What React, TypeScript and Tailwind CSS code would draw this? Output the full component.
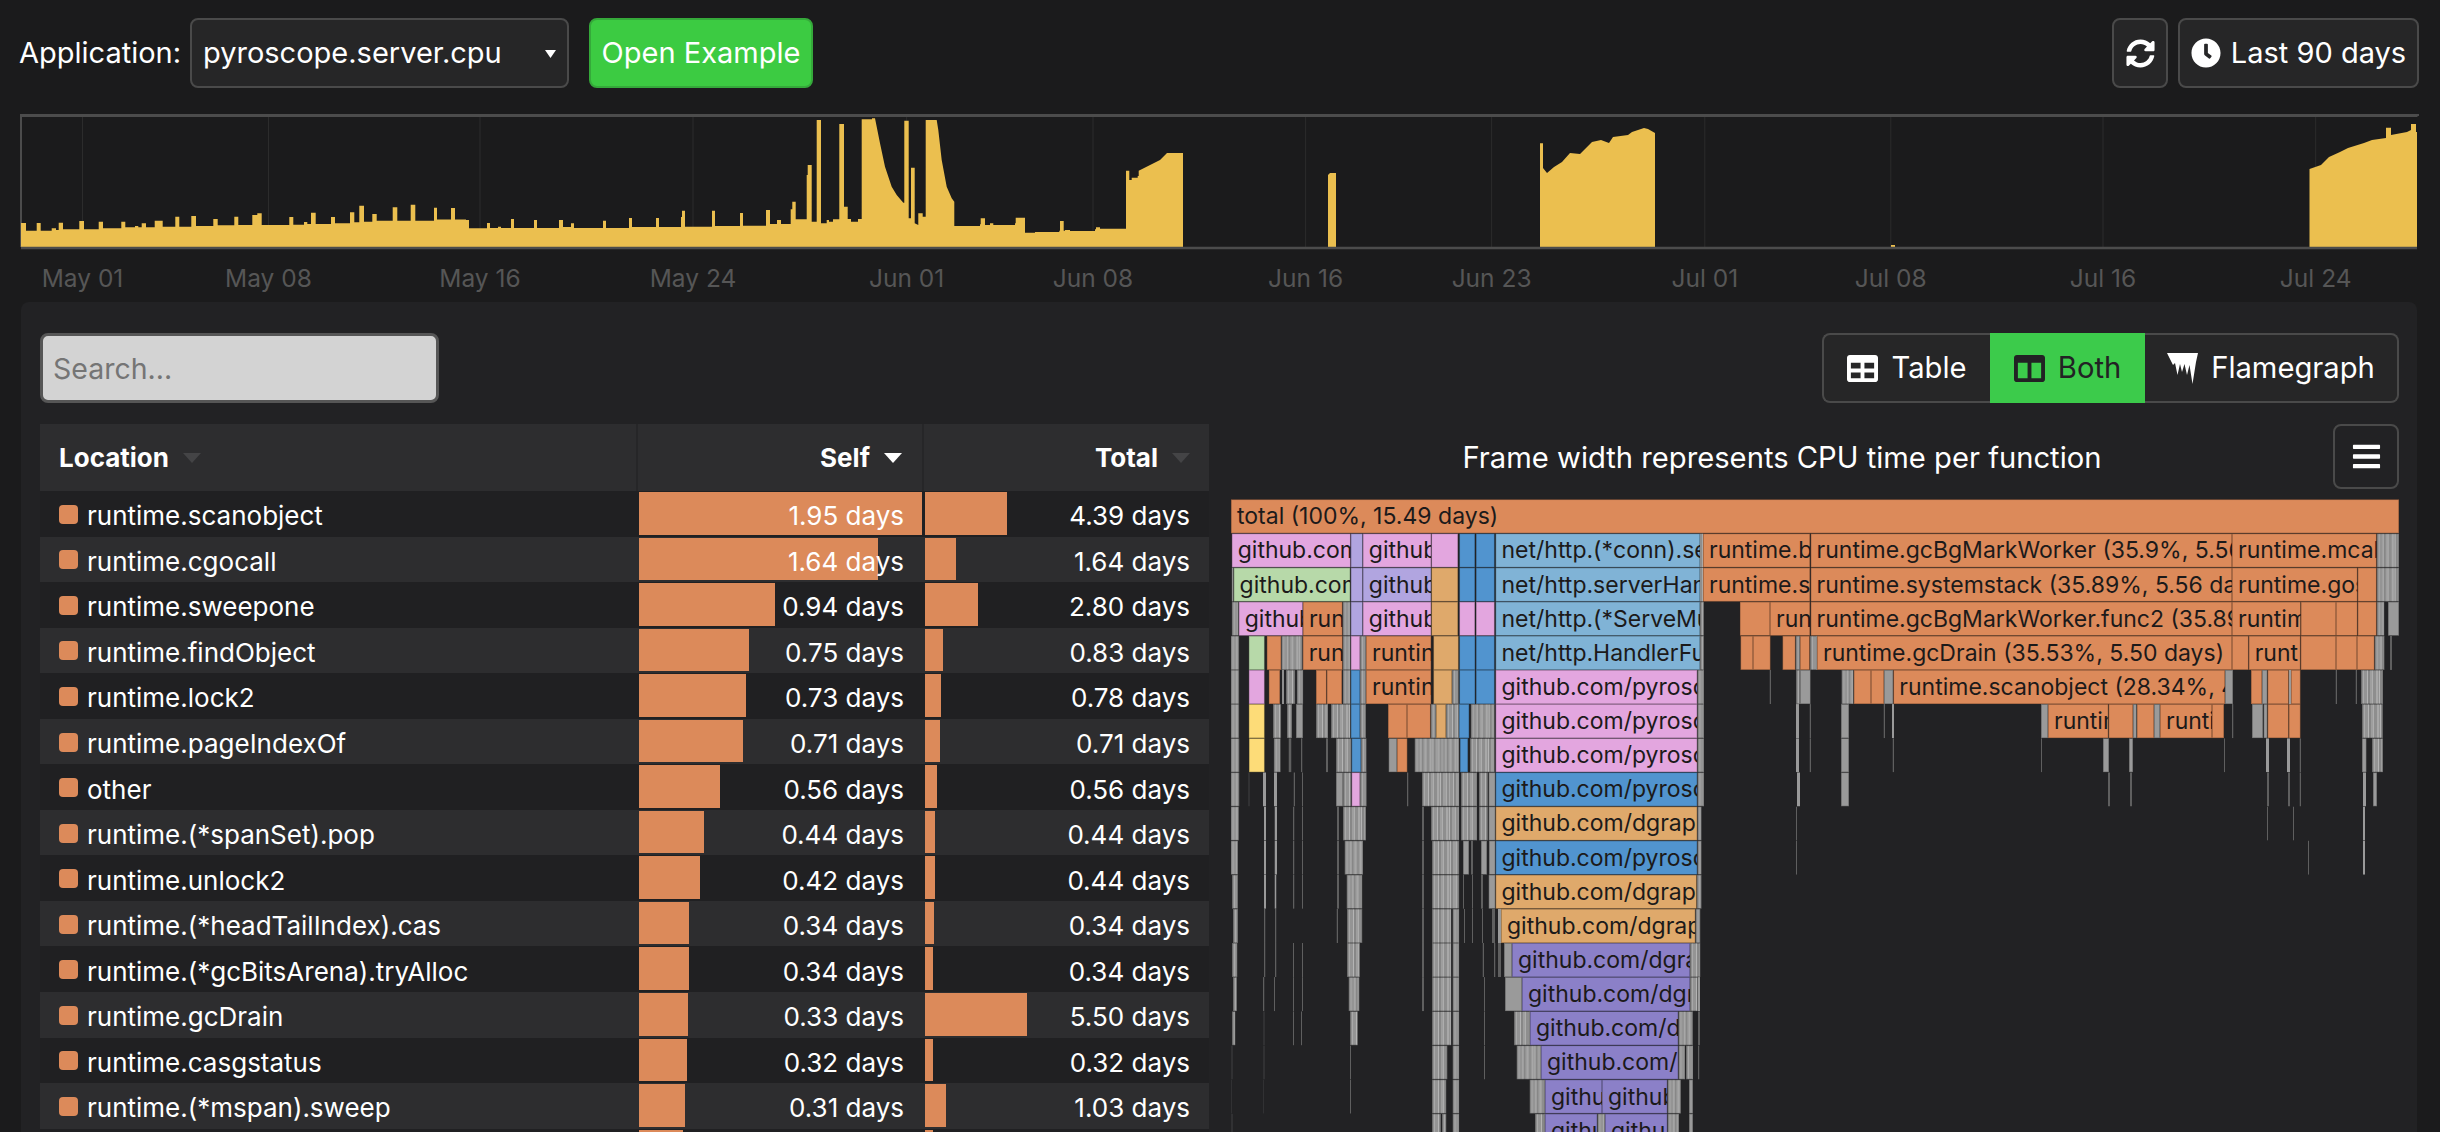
import React from "react";
import { FaBars, FaClock, FaColumns, FaSyncAlt, FaTable } from "react-icons/fa";

// timeline area, page coordinates
const timelineAreas = [
  "M21 247 V223 H26 V230.7 H36.7 V223 H40.7 V230.7 H51.7 V228.3 H56 V230 H58.7 V222.7 H63 V229.3 H79.3 V221 H84 V229.3 H98.7 V221.7 H103 V228.3 H121.3 V221.7 H125.3 V227.3 H135 V226 H138.3 V227.3 H141.7 V223.3 H146 V227.3 H154.7 V220.7 H162.7 V226.7 H175.3 V216.7 H179.3 V226.7 H191.3 V216 H196 V226 H213.3 V219 H217.7 V225.3 H234.3 V216.7 H238.3 V225 H252.3 V215 H257.3 V213.3 H261.7 V225 H289.3 V217 H293.3 V224.7 H304 V222 H307.3 V224 H311 V212.7 H315.7 V224 H331 V217 H335 V223.3 H350 V212.3 H354.3 V222.3 H359.3 V205.7 H364 V221.7 H372.3 V214 H376.7 V220.7 H392.7 V207.3 H397.3 V220.7 H410.7 V204.7 H415.3 V220.7 H434 V207.7 H437 V219.5 H451 V208 H455 V219.5 H466 V220 H469 V228.3 H487 V223 H490 V228 H498 V226.7 H501 V228 H511 V219 H514 V228 H534 V220 H537 V228 H559 V220 H563 V227 H571 V223.3 H574 V228 H603 V220.7 H606 V228 H629 V218 H632 V227 H656 V218 H659 V227 H681 V217 H682 V210.7 H685 V226.7 H712 V210.7 H715 V226 H740 V213 H743 V225.7 H766 V210 H770 V224 H777 V220 H781 V224 H790.7 V209.3 H792.3 V201.7 H795.7 V219.3 H806.7 V175 H807.7 V165 H811.7 V221.7 H816.7 V120 H821 V223.3 H826.7 V220 H829 V221.7 H833 V219.3 H839.3 V124 H844 V206.7 H847.7 V219 H851 V221.7 H858 V219 H861.7 V119.3 H872 V118.3 H875 L880 143.3 L885 166.7 L891.7 186.7 L896.7 195 L903.3 202.7 H904.3 V120.7 H908.7 V218.3 H911 V167.7 H914.7 V223.3 L918.3 225 V213.3 H922.7 V216.7 H925.7 V120 H936.7 L938.3 130 L941.7 160 L946.7 186.7 L951.7 198.3 L954.3 201.7 V226 H980 V224.3 H980.7 V218.3 H985 V225 H990 V223.3 H993.3 V225 H1015 V223.3 H1015.7 V217.7 H1025 V232.7 H1035 V232 H1059.3 V230.7 H1060 V221 H1063.7 V230.7 H1065 V230 H1070 V231 H1095 V229.3 H1096 V227.3 H1100 V228.7 H1126 V170.7 H1129.3 V180 H1131.7 V177.7 H1137.7 V176 H1138.7 V170.7 L1160 160 L1167 153 H1183 V247 Z",
  "M1328 247 V175 L1330 173 H1336 V247 Z",
  "M1540 247 V143.3 H1543 V168 L1547 173 L1554 167 L1562 162 L1570 153 L1580 154 L1592 142 L1601 140 L1609 143 L1613 137 L1628 135 L1632 132 L1644 128 L1648 129 L1655 133 V247 Z",
  "M1891 247 V245 H1895 V247 Z",
  "M2309.5 247 V169 L2321 165 L2329 157 L2340 152 L2348 148 L2364 143 L2372 140 L2386 138 V127.7 H2391 V135 L2407 132 L2411 130 V124 H2416 V132 L2417 132 V247 Z",
];

const timelineTicks = [
  { x: 82.5, label: "May 01" },
  { x: 268.5, label: "May 08" },
  { x: 480, label: "May 16" },
  { x: 693, label: "May 24" },
  { x: 906.6, label: "Jun 01" },
  { x: 1093, label: "Jun 08" },
  { x: 1305.6, label: "Jun 16" },
  { x: 1491.6, label: "Jun 23" },
  { x: 1704.8, label: "Jul 01" },
  { x: 1890.8, label: "Jul 08" },
  { x: 2103, label: "Jul 16" },
  { x: 2315.7, label: "Jul 24" },
];

const tableRows = [
  { name: "runtime.scanobject", self: "1.95 days", total: "4.39 days", selfW: 283, totalW: 82 },
  { name: "runtime.cgocall", self: "1.64 days", total: "1.64 days", selfW: 239, totalW: 31 },
  { name: "runtime.sweepone", self: "0.94 days", total: "2.80 days", selfW: 136, totalW: 53 },
  { name: "runtime.findObject", self: "0.75 days", total: "0.83 days", selfW: 110, totalW: 18 },
  { name: "runtime.lock2", self: "0.73 days", total: "0.78 days", selfW: 107, totalW: 16 },
  { name: "runtime.pageIndexOf", self: "0.71 days", total: "0.71 days", selfW: 104, totalW: 15 },
  { name: "other", self: "0.56 days", total: "0.56 days", selfW: 81, totalW: 12 },
  { name: "runtime.(*spanSet).pop", self: "0.44 days", total: "0.44 days", selfW: 65, totalW: 10 },
  { name: "runtime.unlock2", self: "0.42 days", total: "0.44 days", selfW: 61, totalW: 10 },
  { name: "runtime.(*headTailIndex).cas", self: "0.34 days", total: "0.34 days", selfW: 50, totalW: 9 },
  { name: "runtime.(*gcBitsArena).tryAlloc", self: "0.34 days", total: "0.34 days", selfW: 50, totalW: 8 },
  { name: "runtime.gcDrain", self: "0.33 days", total: "5.50 days", selfW: 49, totalW: 102 },
  { name: "runtime.casgstatus", self: "0.32 days", total: "0.32 days", selfW: 48, totalW: 8 },
  { name: "runtime.(*mspan).sweep", self: "0.31 days", total: "1.03 days", selfW: 46, totalW: 21 },
  { name: "", self: "", total: "", selfW: 44, totalW: 8 },
];

const frameColors: Record<string, string> = {
  o: "#dc8a5a",
  p: "#e3a6df",
  v: "#b1a5e0",
  g: "#b7d9a9",
  t: "#dfa96b",
  b: "#5194cf",
  l: "#80b3d6",
  y: "#fddc78",
  d: "#8b80c8",
  s: "url(#stripes)",
  q: "#9a9a9a",
  n: "#5f5f5f",
};

type Frame = [number, number, string, string?];

// one array per row of the flamegraph, page x coordinates
const flameRows: Frame[][] = [
  [[1231, 2399, "o", "total (100%, 15.49 days)"]],
  [
    [1231.7, 1350.7, "p", "github.com"],
    [1350.7, 1362.8, "v"],
    [1362.8, 1431.3, "p", "github"],
    [1431.3, 1458, "p"],
    [1459.3, 1475, "b"],
    [1476, 1494.7, "b"],
    [1495.5, 1700, "l", "net/http.(*conn).se"],
    [1700, 1703, "s"],
    [1703, 1810, "o", "runtime.b"],
    [1810.6, 2232, "o", "runtime.gcBgMarkWorker (35.9%, 5.56"],
    [2232, 2376.7, "o", "runtime.mcal"],
    [2376.7, 2399, "s"],
  ],
  [
    [1231.7, 1233.6, "s"],
    [1233.6, 1350.4, "g", "github.com"],
    [1350.7, 1362.8, "v"],
    [1362.8, 1431.3, "v", "github"],
    [1431.3, 1458, "t"],
    [1459.3, 1475, "b"],
    [1476, 1494.7, "b"],
    [1495.5, 1700, "l", "net/http.serverHan"],
    [1700, 1703, "s"],
    [1703, 1810, "o", "runtime.s"],
    [1810.6, 2232, "o", "runtime.systemstack (35.89%, 5.56 da"],
    [2232, 2357.6, "o", "runtime.gos"],
    [2357.6, 2376.7, "o"],
    [2376.7, 2399, "s"],
  ],
  [
    [1231.7, 1238.7, "s"],
    [1238.7, 1302.9, "p", "github"],
    [1302.9, 1342.6, "o", "run"],
    [1342.6, 1350.7, "s"],
    [1350.7, 1362.8, "v"],
    [1362.8, 1431.3, "p", "github"],
    [1431.3, 1458, "t"],
    [1459.3, 1475, "p"],
    [1476, 1494.7, "p"],
    [1495.5, 1700, "l", "net/http.(*ServeMu"],
    [1700, 1704, "s"],
    [1739.8, 1770, "o"],
    [1770, 1810, "o", "run"],
    [1810.6, 2232, "o", "runtime.gcBgMarkWorker.func2 (35.89"],
    [2232, 2300.8, "o", "runtim"],
    [2300.8, 2336, "o"],
    [2336, 2357.6, "o"],
    [2357.6, 2376.7, "o"],
    [2376.7, 2384.5, "s"],
    [2388, 2399, "q"],
  ],
  [
    [1230.5, 1239.3, "s"],
    [1248.7, 1264.7, "g"],
    [1266.7, 1281.3, "o"],
    [1281.3, 1302.7, "s"],
    [1302.7, 1342.7, "o", "run"],
    [1342.7, 1350.7, "s"],
    [1350.7, 1360, "p"],
    [1360, 1366, "s"],
    [1366, 1431.3, "o", "runtin"],
    [1433.3, 1458.7, "t"],
    [1459.3, 1475.3, "b"],
    [1476, 1494.7, "b"],
    [1495.5, 1700, "l", "net/http.HandlerFu"],
    [1700, 1704, "s"],
    [1740.4, 1753, "o"],
    [1753, 1770.6, "o"],
    [1782.4, 1795.6, "o"],
    [1795.6, 1800, "s"],
    [1800, 1809.8, "o"],
    [1810, 1817, "s"],
    [1817, 2232, "o", "runtime.gcDrain (35.53%, 5.50 days)"],
    [2232, 2248.7, "o"],
    [2248.7, 2300.6, "o", "runt"],
    [2300.6, 2336, "o"],
    [2336, 2357, "o"],
    [2357, 2374.6, "o"],
    [2374.6, 2384.6, "s"],
    [2390, 2392, "n"],
  ],
  [
    [1230.5, 1239.3, "s"],
    [1248.7, 1264.7, "p"],
    [1268.7, 1280, "o"],
    [1282, 1284, "s"],
    [1286, 1295.3, "s"],
    [1296.7, 1303.3, "s"],
    [1316, 1326.7, "o"],
    [1326.7, 1342, "o"],
    [1342.7, 1350.7, "s"],
    [1350.7, 1360, "b"],
    [1360, 1366, "s"],
    [1366, 1431.3, "o", "runtin"],
    [1433.3, 1452, "t"],
    [1452, 1458.7, "s"],
    [1459.3, 1475.3, "b"],
    [1476, 1494.7, "b"],
    [1495.5, 1697.4, "p", "github.com/pyrosc"],
    [1697.4, 1704, "s"],
    [1769.5, 1771, "n"],
    [1796, 1800, "s"],
    [1800, 1810.7, "q"],
    [1841.4, 1853.7, "s"],
    [1853.7, 1871, "o"],
    [1871, 1884, "o"],
    [1884, 1893.3, "q"],
    [1893.3, 2225, "o", "runtime.scanobject (28.34%, 4"],
    [2225, 2233, "q"],
    [2251, 2262, "o"],
    [2262, 2267.5, "q"],
    [2267.5, 2288.8, "o"],
    [2288.8, 2291, "q"],
    [2291, 2300.6, "o"],
    [2335.5, 2337, "n"],
    [2355.5, 2357, "n"],
    [2361, 2383, "s"],
  ],
  [
    [1230.5, 1239.3, "s"],
    [1248.7, 1264.7, "y"],
    [1273, 1281.3, "s"],
    [1287, 1292, "s"],
    [1296, 1303, "q"],
    [1316, 1328, "s"],
    [1331, 1350.7, "s"],
    [1350.7, 1360, "b"],
    [1360, 1366, "s"],
    [1388, 1407, "o"],
    [1407, 1430.7, "o"],
    [1430.7, 1436, "s"],
    [1436, 1446, "t"],
    [1446, 1459, "s"],
    [1459, 1469.3, "b"],
    [1470.7, 1494.7, "s"],
    [1495.5, 1697.4, "p", "github.com/pyrosc"],
    [1697.4, 1704, "s"],
    [1796, 1799, "q"],
    [1809.5, 1811, "n"],
    [1841, 1849, "q"],
    [1883.5, 1885, "n"],
    [1892, 1894, "q"],
    [2041, 2048, "q"],
    [2048, 2108.5, "o", "runtim"],
    [2108.5, 2133, "o"],
    [2133, 2136.8, "q"],
    [2136.8, 2154, "o"],
    [2154, 2160, "q"],
    [2160, 2212, "o", "runti"],
    [2212, 2224, "o"],
    [2232, 2233.5, "n"],
    [2252, 2263, "q"],
    [2263.5, 2267.5, "q"],
    [2267.5, 2288.8, "o"],
    [2288.8, 2300.6, "o"],
    [2362, 2383, "s"],
  ],
  [
    [1230.5, 1239.5, "s"],
    [1249, 1264.7, "y"],
    [1273.7, 1280.7, "s"],
    [1288.5, 1291.5, "n"],
    [1301, 1302.5, "n"],
    [1326, 1328, "n"],
    [1336, 1351.5, "s"],
    [1351.5, 1361, "b"],
    [1361, 1366.7, "s"],
    [1388.5, 1397, "q"],
    [1397, 1407.5, "o"],
    [1414.5, 1459.3, "s"],
    [1460, 1468, "b"],
    [1470, 1494.7, "s"],
    [1495.5, 1697.4, "p", "github.com/pyrosc"],
    [1697.4, 1704, "s"],
    [1796, 1799, "q"],
    [1809.5, 1811, "n"],
    [1841, 1849, "q"],
    [1892.5, 1894, "n"],
    [2041, 2042, "n"],
    [2103, 2109, "q"],
    [2129, 2133, "q"],
    [2224, 2225, "n"],
    [2266, 2269, "q"],
    [2287, 2290, "q"],
    [2299.5, 2301, "n"],
    [2362, 2366.6, "q"],
    [2372, 2383, "s"],
  ],
  [
    [1230.5, 1239.5, "s"],
    [1248.5, 1249.5, "n"],
    [1263, 1266, "q"],
    [1274, 1277, "q"],
    [1293.5, 1295, "n"],
    [1302, 1303, "n"],
    [1336, 1343, "q"],
    [1343, 1351.5, "s"],
    [1351.5, 1360, "p"],
    [1360, 1366.7, "s"],
    [1407, 1408.5, "n"],
    [1422, 1459.3, "s"],
    [1461, 1477, "s"],
    [1479, 1488, "s"],
    [1488.5, 1495.5, "q"],
    [1495.5, 1697.4, "b", "github.com/pyrosc"],
    [1697.4, 1704, "s"],
    [1797, 1800, "q"],
    [1841, 1849, "q"],
    [2108, 2110, "n"],
    [2130, 2132, "n"],
    [2267, 2269, "n"],
    [2288, 2290, "n"],
    [2299.5, 2301, "n"],
    [2363, 2366, "q"],
    [2373, 2377, "q"],
  ],
  [
    [1230.5, 1239, "s"],
    [1264, 1266, "q"],
    [1274.5, 1277, "q"],
    [1293, 1294.5, "n"],
    [1302, 1303, "n"],
    [1337, 1339, "n"],
    [1343, 1366, "s"],
    [1422, 1424, "n"],
    [1431, 1459.3, "s"],
    [1461, 1477, "s"],
    [1479, 1488, "s"],
    [1488.5, 1495.5, "q"],
    [1495.5, 1697.4, "t", "github.com/dgraph"],
    [1697.4, 1701.7, "s"],
    [1796, 1797, "n"],
    [2363, 2365, "q"],
    [2293, 2294, "n"],
    [2267, 2268, "n"],
  ],
  [
    [1230.5, 1238, "s"],
    [1264, 1266, "q"],
    [1274.5, 1277, "q"],
    [1293, 1294.5, "n"],
    [1302, 1303, "n"],
    [1337, 1339, "n"],
    [1344.5, 1363, "s"],
    [1422, 1424, "n"],
    [1432, 1459.3, "s"],
    [1463, 1469, "q"],
    [1471, 1473, "n"],
    [1481, 1487, "q"],
    [1489, 1495.5, "q"],
    [1495.5, 1697.4, "b", "github.com/pyrosc"],
    [1697.4, 1701.7, "s"],
    [1796, 1797, "n"],
    [2363, 2365, "q"],
    [2308, 2309, "n"],
  ],
  [
    [1232, 1238, "s"],
    [1264, 1266, "q"],
    [1274.5, 1276.5, "q"],
    [1293, 1294.5, "n"],
    [1302, 1303, "n"],
    [1337, 1339, "n"],
    [1346.5, 1362.4, "s"],
    [1422, 1424, "n"],
    [1432, 1459.3, "s"],
    [1463, 1464, "n"],
    [1472, 1473, "n"],
    [1481, 1483, "n"],
    [1488.5, 1495.5, "q"],
    [1495.5, 1696.8, "t", "github.com/dgraph"],
    [1696.8, 1701.7, "s"],
  ],
  [
    [1233, 1238, "s"],
    [1264, 1265.5, "n"],
    [1275, 1276.5, "n"],
    [1336.5, 1338, "n"],
    [1347, 1362.4, "s"],
    [1422, 1424, "n"],
    [1432, 1451.5, "s"],
    [1452.5, 1459.3, "s"],
    [1464, 1465, "n"],
    [1472, 1473, "n"],
    [1482, 1483, "n"],
    [1492, 1495, "n"],
    [1498, 1501, "q"],
    [1501, 1695.5, "t", "github.com/dgrap"],
    [1695.5, 1700.5, "s"],
  ],
  [
    [1232, 1237.5, "s"],
    [1264, 1265.5, "n"],
    [1275, 1276.5, "n"],
    [1293, 1294, "n"],
    [1302, 1303, "n"],
    [1347, 1360, "s"],
    [1422, 1424, "n"],
    [1432, 1451.5, "s"],
    [1452.5, 1459.3, "s"],
    [1482.5, 1484, "n"],
    [1494, 1495.5, "n"],
    [1498, 1501, "n"],
    [1504, 1512, "q"],
    [1512, 1690, "d", "github.com/dgra"],
    [1690, 1700.5, "s"],
  ],
  [
    [1233, 1237, "s"],
    [1263, 1264.5, "n"],
    [1274, 1275, "n"],
    [1293, 1294, "n"],
    [1302, 1303, "n"],
    [1348.5, 1359.5, "s"],
    [1422, 1424, "n"],
    [1432, 1451.5, "s"],
    [1452.5, 1459.3, "s"],
    [1484, 1485, "n"],
    [1505, 1522, "q"],
    [1522, 1690, "d", "github.com/dgr"],
    [1690, 1698, "s"],
    [1698, 1700, "q"],
  ],
  [
    [1232, 1235.5, "s"],
    [1263.5, 1264.5, "n"],
    [1293, 1294, "n"],
    [1301, 1302, "n"],
    [1350, 1358, "s"],
    [1432, 1451.5, "s"],
    [1452.5, 1459.3, "s"],
    [1484, 1485, "n"],
    [1514, 1530, "s"],
    [1530, 1678.4, "d", "github.com/d"],
    [1678.4, 1693, "s"],
    [1698, 1700, "n"],
  ],
  [
    [1231.5, 1232.5, "n"],
    [1263.5, 1264.5, "n"],
    [1350, 1351, "n"],
    [1432, 1447.5, "s"],
    [1452.5, 1459.3, "s"],
    [1484, 1485, "n"],
    [1516.5, 1541, "s"],
    [1541, 1678.4, "d", "github.com/d"],
    [1678.4, 1685, "s"],
    [1686, 1693, "s"],
    [1698, 1699.5, "n"],
  ],
  [
    [1231.5, 1232, "n"],
    [1263.5, 1264, "n"],
    [1350, 1351, "n"],
    [1432, 1446.5, "s"],
    [1452.5, 1459.3, "s"],
    [1529.5, 1545, "s"],
    [1545, 1602, "d", "githu"],
    [1602, 1667.5, "d", "github"],
    [1667.5, 1681, "s"],
    [1689, 1693, "q"],
  ],
  [
    [1231.5, 1232.5, "n"],
    [1432, 1441, "s"],
    [1442, 1446.5, "s"],
    [1452.5, 1459.3, "s"],
    [1535, 1545, "s"],
    [1545, 1597.4, "d", "githu"],
    [1597.4, 1605, "s"],
    [1605, 1667.5, "d", "githu"],
    [1667.5, 1679, "s"],
    [1689, 1693, "q"],
  ],
];

const ROW_H = 34.13;

const stripeWidths = [2, 1, 3, 1, 2, 2, 1, 3, 2, 1, 1, 2, 3, 1];
const stripeColors = ["#8e8e8e", "#a8a8a8", "#949494", "#b4b4b4", "#878787", "#9e9e9e", "#adadad"];

const SortCaret = ({ active = false }: { active?: boolean }) => (
  <svg width="18" height="10" viewBox="0 0 18 10" className="shrink-0">
    <path d="M0 0 H18 L9 10 Z" fill={active ? "#ffffff" : "#444446"} />
  </svg>
);

const Timeline = () => (
  <svg viewBox="0 112 2440 190" width={2440} height={190} className="block mt-[24px]">
    {timelineTicks.map((t) => (
      <line key={t.x} x1={t.x} x2={t.x} y1={116} y2={247} stroke="#2c2c2c" strokeWidth={1} />
    ))}
    <path d="M21 116 V247" stroke="#4c4c4c" strokeWidth={2} />
    {timelineAreas.map((d, i) => (
      <path key={i} d={d} fill="#ebbf4f" />
    ))}
    <path d="M20 115.5 H2417.5 V116" stroke="#4c4c4c" strokeWidth={3} fill="none" />
    <path d="M21 248 H2417" stroke="#4c4c4c" strokeWidth={2.5} />
    {timelineTicks.map((t) => (
      <text key={t.label} x={t.x} y={287} textAnchor="middle" fontSize={24.5} fill="#565656" fontFamily="Inter, sans-serif">
        {t.label}
      </text>
    ))}
  </svg>
);

const FlameFrames = () => (
  <svg viewBox="1231 499 1168 633" width={1168} height={633} className="block">
    <defs>
      <pattern id="stripes" patternUnits="userSpaceOnUse" width={25} height={34}>
        {stripeWidths.map((w, i) => {
          const x = stripeWidths.slice(0, i).reduce((a, b) => a + b, 0);
          return <rect key={i} x={x} y={0} width={w} height={34} fill={stripeColors[i % stripeColors.length]} />;
        })}
      </pattern>
    </defs>
    {flameRows.map((row, r) =>
      row.map(([x0, x1, c, label], i) => {
        const w = x1 - x0;
        const y = 499.3 + r * ROW_H;
        return (
          <svg key={`${r}-${i}`} x={x0} y={y} width={w} height={ROW_H}>
            <rect
              x={0}
              y={0}
              width={w}
              height={ROW_H}
              fill={frameColors[c]}
              stroke={w > 3 ? "#00000050" : "none"}
              strokeWidth={1.5}
            />
            {label && (
              <text x={6} y={25} fontSize={23} fill="#1c1a1a" fontFamily="Inter, sans-serif">
                {label}
              </text>
            )}
          </svg>
        );
      })
    )}
  </svg>
);

const IcicleIcon = () => (
  <svg width="31" height="31" viewBox="0 0 31 31" className="shrink-0">
    <path
      d="M0 0 H31 L29 9 L25.5 31 L22.5 12 L20 22 L17.5 11 L15 19 L13 11 L10.5 22 L8 10 L6 12 Z"
      fill="#ffffff"
    />
  </svg>
);

export default function App() {
  return (
    <div className="w-[2440px] h-[1132px] overflow-hidden bg-[#1b1b1c] text-white font-[Inter,sans-serif] flex flex-col">
      {/* Toolbar */}
      <div className="flex items-center h-[70px] mt-[18px] pl-[19px] pr-[21px] text-[29px]">
        <span className="w-[171px]">Application:</span>
        <div className="relative flex items-center w-[379px] h-full px-[11px] bg-[#262627] border-2 border-[#4a4a4a] rounded-lg">
          pyroscope.server.cpu
          <svg width="11" height="8" viewBox="0 0 11 8" className="absolute right-[11px] top-[30px]">
            <path d="M0 0 H11 L5.5 8 Z" fill="#ffffff" />
          </svg>
        </div>
        <button className="ml-[20px] w-[224px] h-full bg-[#3ccb42] border-2 border-[#35a93a] rounded-lg">
          Open Example
        </button>
        <button className="ml-auto w-[56px] h-full flex items-center justify-center bg-[#262627] border-2 border-[#4a4a4a] rounded-lg">
          <FaSyncAlt size={29} />
        </button>
        <button className="ml-[10px] w-[241px] h-full flex items-center justify-center gap-[10px] bg-[#262627] border-2 border-[#4a4a4a] rounded-lg">
          <FaClock size={30} />
          Last 90 days
        </button>
      </div>

      <Timeline />

      {/* Main panel */}
      <div className="flex-1 min-h-0 ml-[21px] w-[2396px] bg-[#222224] rounded-t-lg pl-[19px] pr-[18px] pt-[31px]">
        <div className="flex justify-between h-[70px]">
          <input
            placeholder="Search..."
            className="w-[399px] h-full px-[10px] bg-[#d3d3d3] border-[3px] border-[#565656] rounded-lg text-[28.5px] text-black placeholder:text-[#757575]"
          />
          <div className="flex h-full text-[29.2px]">
            <button className="w-[168px] flex items-center justify-center gap-[13px] bg-[#262627] border-2 border-r-0 border-[#4a4a4a] rounded-l-lg">
              <FaTable size={31} />
              Table
            </button>
            <button className="w-[155px] flex items-center justify-center gap-[13px] bg-[#3ccb4b] text-[#222224]">
              <FaColumns size={31} />
              Both
            </button>
            <button className="w-[254px] flex items-center justify-center gap-[13px] bg-[#262627] border-2 border-l-0 border-[#4a4a4a] rounded-r-lg">
              <IcicleIcon />
              Flamegraph
            </button>
          </div>
        </div>

        <div className="flex gap-[22px] mt-[21px]">
          {/* Table */}
          <div className="w-[1169px] shrink-0 text-[26px]">
            <div className="flex h-[67px] bg-[#2d2d2f] font-bold">
              <div className="w-[598px] flex items-center gap-[14px] pl-[19px] border-r-2 border-[#262628]">
                Location
                <SortCaret />
              </div>
              <div className="w-[286px] flex items-center justify-end gap-[14px] pr-[20px] border-r-2 border-[#262628]">
                Self
                <SortCaret active />
              </div>
              <div className="w-[285px] flex items-center justify-end gap-[14px] pr-[19px]">
                Total
                <SortCaret />
              </div>
            </div>
            {tableRows.map((row, i) => (
              <div key={i} className={`flex h-[45.55px] ${i % 2 === 0 ? "bg-[#202022]" : "bg-[#2d2d2f]"}`}>
                <div className="w-[598px] flex items-center gap-[9px] pl-[19px] pt-[4px]">
                  {row.name && <span className="w-[19px] h-[19px] -mt-[3px] rounded-[4px] bg-[#dc8a5a]" />}
                  {row.name}
                </div>
                <div className="relative w-[286px] flex items-center justify-end pr-[20px] pt-[4px]">
                  <div
                    className="absolute left-[1px] top-[1px] bottom-[2px] bg-[#dc8a5a]"
                    style={{ width: row.selfW }}
                  />
                  <span className="relative">{row.self}</span>
                </div>
                <div className="relative w-[285px] flex items-center justify-end pr-[19px] pt-[4px]">
                  <div
                    className="absolute left-[1px] top-[1px] bottom-[2px] bg-[#dc8a5a]"
                    style={{ width: row.totalW }}
                  />
                  <span className="relative">{row.total}</span>
                </div>
              </div>
            ))}
          </div>

          {/* Flamegraph */}
          <div className="w-[1168px] shrink-0">
            <div className="flex items-center h-[65px] mb-[10px]">
              <span className="flex-1 text-center text-[29.2px] pt-[2px]">Frame width represents CPU time per function</span>
              <button className="w-[66px] h-full flex items-center justify-center bg-[#222224] border-2 border-[#4a4a4a] rounded-lg">
                <FaBars size={31} />
              </button>
            </div>
            <FlameFrames />
          </div>
        </div>
      </div>
    </div>
  );
}
